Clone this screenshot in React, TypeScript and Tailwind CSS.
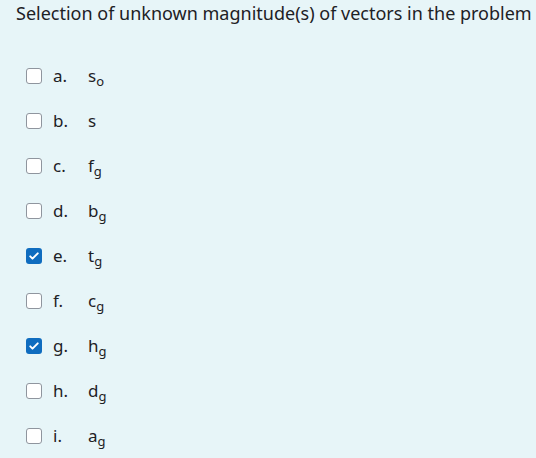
import React from 'react';

const options = [
  { key: 'a', base: 's', sub: 'o', checked: false },
  { key: 'b', base: 's', sub: '', checked: false },
  { key: 'c', base: 'f', sub: 'g', checked: false },
  { key: 'd', base: 'b', sub: 'g', checked: false },
  { key: 'e', base: 't', sub: 'g', checked: true },
  { key: 'f', base: 'c', sub: 'g', checked: false },
  { key: 'g', base: 'h', sub: 'g', checked: true },
  { key: 'h', base: 'd', sub: 'g', checked: false },
  { key: 'i', base: 'a', sub: 'g', checked: false },
];

function Checkbox({ checked }: { checked: boolean }) {
  if (checked) {
    return (
      <span className="w-4 h-4 rounded-[3px] bg-[#0f6cbf] flex items-center justify-center shrink-0">
        <svg viewBox="0 0 16 16" className="w-3 h-3" fill="none">
          <path d="M3 8.5l3 3 7-7" stroke="white" strokeWidth="2.6" strokeLinecap="round" strokeLinejoin="round" />
        </svg>
      </span>
    );
  }
  return <span className="w-4 h-4 rounded-[3px] border border-[#8f959e] bg-white shrink-0" />;
}

export default function App() {
  return (
    <div className="w-[536px] h-[458px] bg-[#e7f5f8] overflow-hidden text-[#1d2125]" style={{ fontFamily: '"Noto Sans", sans-serif' }}>
      <div className="pl-4 pt-[1px] text-[18px] leading-[24px] whitespace-nowrap flex items-end">
        <span>Selection of unknown magnitude(s) of vectors in the problem</span>
        <span className="ml-[5px] mb-[5px] w-[3px] h-[2px] bg-[#f0a030] shrink-0" />
      </div>
      <div className="mt-[39px] pl-[26px] flex flex-col gap-[21px]">
        {options.map((o) => (
          <div key={o.key} className="flex items-center h-6 text-[17px]">
            <Checkbox checked={o.checked} />
            <span className="ml-[11px] w-[35px]">{o.key}.</span>
            <span>
              {o.base}
              {o.sub && <sub className="text-[13px]">{o.sub}</sub>}
            </span>
          </div>
        ))}
      </div>
    </div>
  );
}
